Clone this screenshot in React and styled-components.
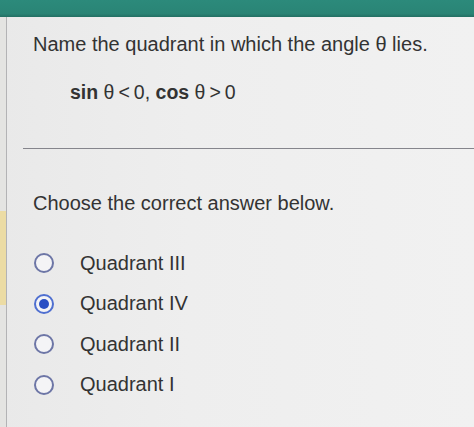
import React from 'react';
import styled, { createGlobalStyle } from 'styled-components';

const GlobalStyle = createGlobalStyle`
  html, body {
    margin: 0;
    padding: 0;
    background: #ececec;
  }
  body {
    font-family: "Liberation Sans", Arial, sans-serif;
    color: #333;
  }
`;

const Page = styled.div`
  width: 474px;
  height: 427px;
  overflow: hidden;
  display: flex;
  flex-direction: column;
  background: linear-gradient(to right, #e9e9e9, #eeeeee 40%, #f1f1f1);
`;

const TopBar = styled.div`
  height: 17px;
  flex-shrink: 0;
  background: linear-gradient(to bottom, #2c8a7b, #2a8475 80%, #236f63);
`;

const Body = styled.div`
  flex: 1;
  display: flex;
`;

const Gutter = styled.div`
  width: 6px;
  flex-shrink: 0;
  display: flex;
  flex-direction: column;
  background: #e4e4e2;
  border-right: 1.5px solid #b3b3b5;
`;

const Marker = styled.div`
  margin-top: ${(p) => p.$top}px;
  height: ${(p) => p.$height}px;
  background: #ecdca4;
`;

const Content = styled.div`
  flex: 1;
  display: flex;
  flex-direction: column;
  padding: 15px 0 0 16px;
`;

const Question = styled.p`
  margin: 0 0 0 10px;
  font-size: 20px;
  line-height: 24px;
  color: #333;
`;

const Formula = styled.p`
  margin: 25px 0 0 47px;
  font-size: 19.5px;
  line-height: 22px;
  color: #333;
`;

const Fn = styled.b`
  font-weight: bold;
`;

const Op = styled.span`
  margin: 0 4px;
`;

const Divider = styled.hr`
  margin: 45px 0 0 0;
  border: 0;
  border-top: 1.5px solid #85858c;
`;

const Prompt = styled.p`
  margin: 42px 0 0 10px;
  font-size: 20px;
  line-height: 24px;
  color: #333;
`;

const Options = styled.div`
  margin: 28px 0 0 11px;
  display: flex;
  flex-direction: column;
`;

const Option = styled.label`
  height: 40.5px;
  display: flex;
  align-items: center;
  gap: 26px;
  font-size: 20px;
  color: #333;
`;

const Radio = styled.span`
  width: 16px;
  height: 16px;
  border-radius: 50%;
  border: 2px solid ${(p) => (p.$checked ? '#4f6fd0' : '#6d76a6')};
  display: flex;
  align-items: center;
  justify-content: center;
  background: #f4f4f6;
  &::after {
    content: '';
    display: ${(p) => (p.$checked ? 'block' : 'none')};
    width: 10px;
    height: 10px;
    border-radius: 50%;
    background: #2a4fc4;
  }
`;

const answers = [
  { label: 'Quadrant III', checked: false },
  { label: 'Quadrant IV', checked: true },
  { label: 'Quadrant II', checked: false },
  { label: 'Quadrant I', checked: false },
];

export default function App() {
  return (
    <Page>
      <GlobalStyle />
      <TopBar />
      <Body>
        <Gutter>
          <Marker $top={194} $height={94} />
        </Gutter>
        <Content>
          <Question>Name the quadrant in which the angle θ lies.</Question>
          <Formula>
            <Fn>sin</Fn> θ<Op>&lt;</Op>0, <Fn>cos</Fn> θ<Op>&gt;</Op>0
          </Formula>
          <Divider />
          <Prompt>Choose the correct answer below.</Prompt>
          <Options>
            {answers.map((a) => (
              <Option key={a.label}>
                <Radio $checked={a.checked} />
                {a.label}
              </Option>
            ))}
          </Options>
        </Content>
      </Body>
    </Page>
  );
}
